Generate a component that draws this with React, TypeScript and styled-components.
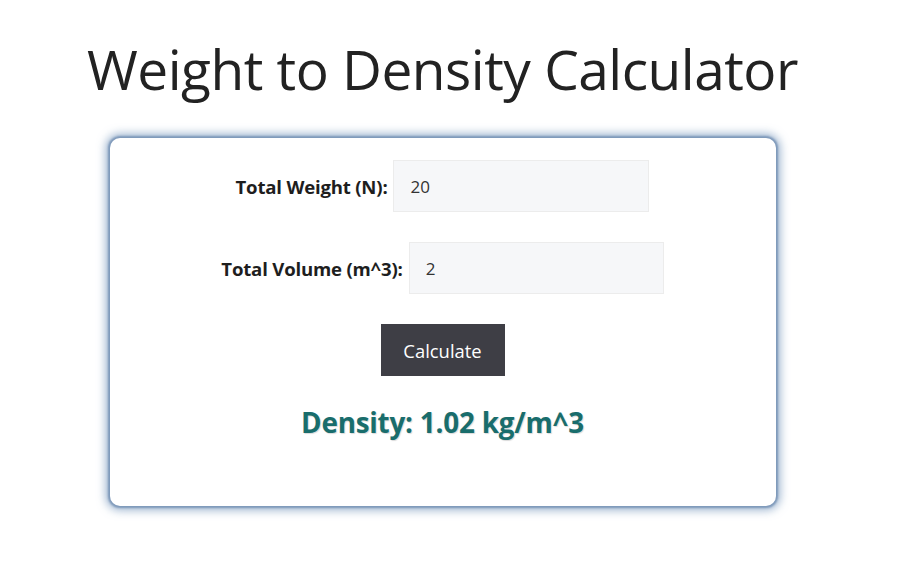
import React, { useState } from "react";
import styled, { createGlobalStyle } from "styled-components";

const GlobalStyle = createGlobalStyle`
  html, body {
    margin: 0;
    padding: 0;
    background: #ffffff;
  }
  body {
    font-family: "Open Sans", "Noto Sans", sans-serif;
    color: #212121;
  }
`;

const Page = styled.main`
  width: calc(100% - 16px);
  padding-bottom: 40px;
  display: flex;
  flex-direction: column;
  align-items: center;
`;

const Title = styled.h1`
  margin: 28px 0 0;
  font-size: 55px;
  font-weight: 400;
  line-height: 82px;
  color: #222222;
  letter-spacing: -0.5px;
`;

const Card = styled.section`
  box-sizing: border-box;
  margin-top: 28px;
  width: 666px;
  height: 368px;
  padding-top: 22px;
  background: #ffffff;
  border-radius: 10px;
  box-shadow: 0 0 2px 2px rgba(120, 148, 182, 0.9), 0 0 10px 4px rgba(120, 152, 190, 0.75);
  display: flex;
  flex-direction: column;
  align-items: center;
  gap: 30px;
`;

const Row = styled.div`
  display: flex;
  align-items: center;
  gap: 6px;
`;

const Label = styled.label`
  font-size: 18.6px;
  font-weight: 700;
  color: #1e1e1e;
  letter-spacing: -0.2px;
`;

const Input = styled.input<{ $w: number }>`
  box-sizing: border-box;
  width: ${(p) => p.$w}px;
  height: 52px;
  padding: 0 16px;
  border: 1px solid #ececec;
  background: #f6f7f9;
  font-family: inherit;
  font-size: 17px;
  color: #333333;
  outline: none;
`;

const Button = styled.button`
  width: 124px;
  height: 52px;
  border: none;
  background: #3e3e45;
  color: #ffffff;
  font-family: inherit;
  font-size: 18.4px;
  cursor: pointer;
`;

const Result = styled.h2`
  margin: -3px 0 0;
  font-size: 27.8px;
  font-weight: 700;
  color: #196d6c;
  letter-spacing: -0.2px;
  text-shadow: 1px 1px 1px rgba(0, 0, 0, 0.15);
`;

export default function App() {
  const [weight, setWeight] = useState("20");
  const [volume, setVolume] = useState("2");
  const [density, setDensity] = useState("1.02");

  const calculate = () => {
    const w = parseFloat(weight);
    const v = parseFloat(volume);
    if (!isNaN(w) && !isNaN(v) && v !== 0) {
      setDensity((w / 9.81 / v).toFixed(2));
    }
  };

  return (
    <>
      <GlobalStyle />
      <Page>
        <Title>Weight to Density Calculator</Title>
        <Card>
          <Row>
            <Label htmlFor="weight">Total Weight (N):</Label>
            <Input $w={256} id="weight" value={weight} onChange={(e) => setWeight(e.target.value)} />
          </Row>
          <Row>
            <Label htmlFor="volume">Total Volume (m^3):</Label>
            <Input $w={255} id="volume" value={volume} onChange={(e) => setVolume(e.target.value)} />
          </Row>
          <Button onClick={calculate}>Calculate</Button>
          <Result>Density: {density} kg/m^3</Result>
        </Card>
      </Page>
    </>
  );
}
